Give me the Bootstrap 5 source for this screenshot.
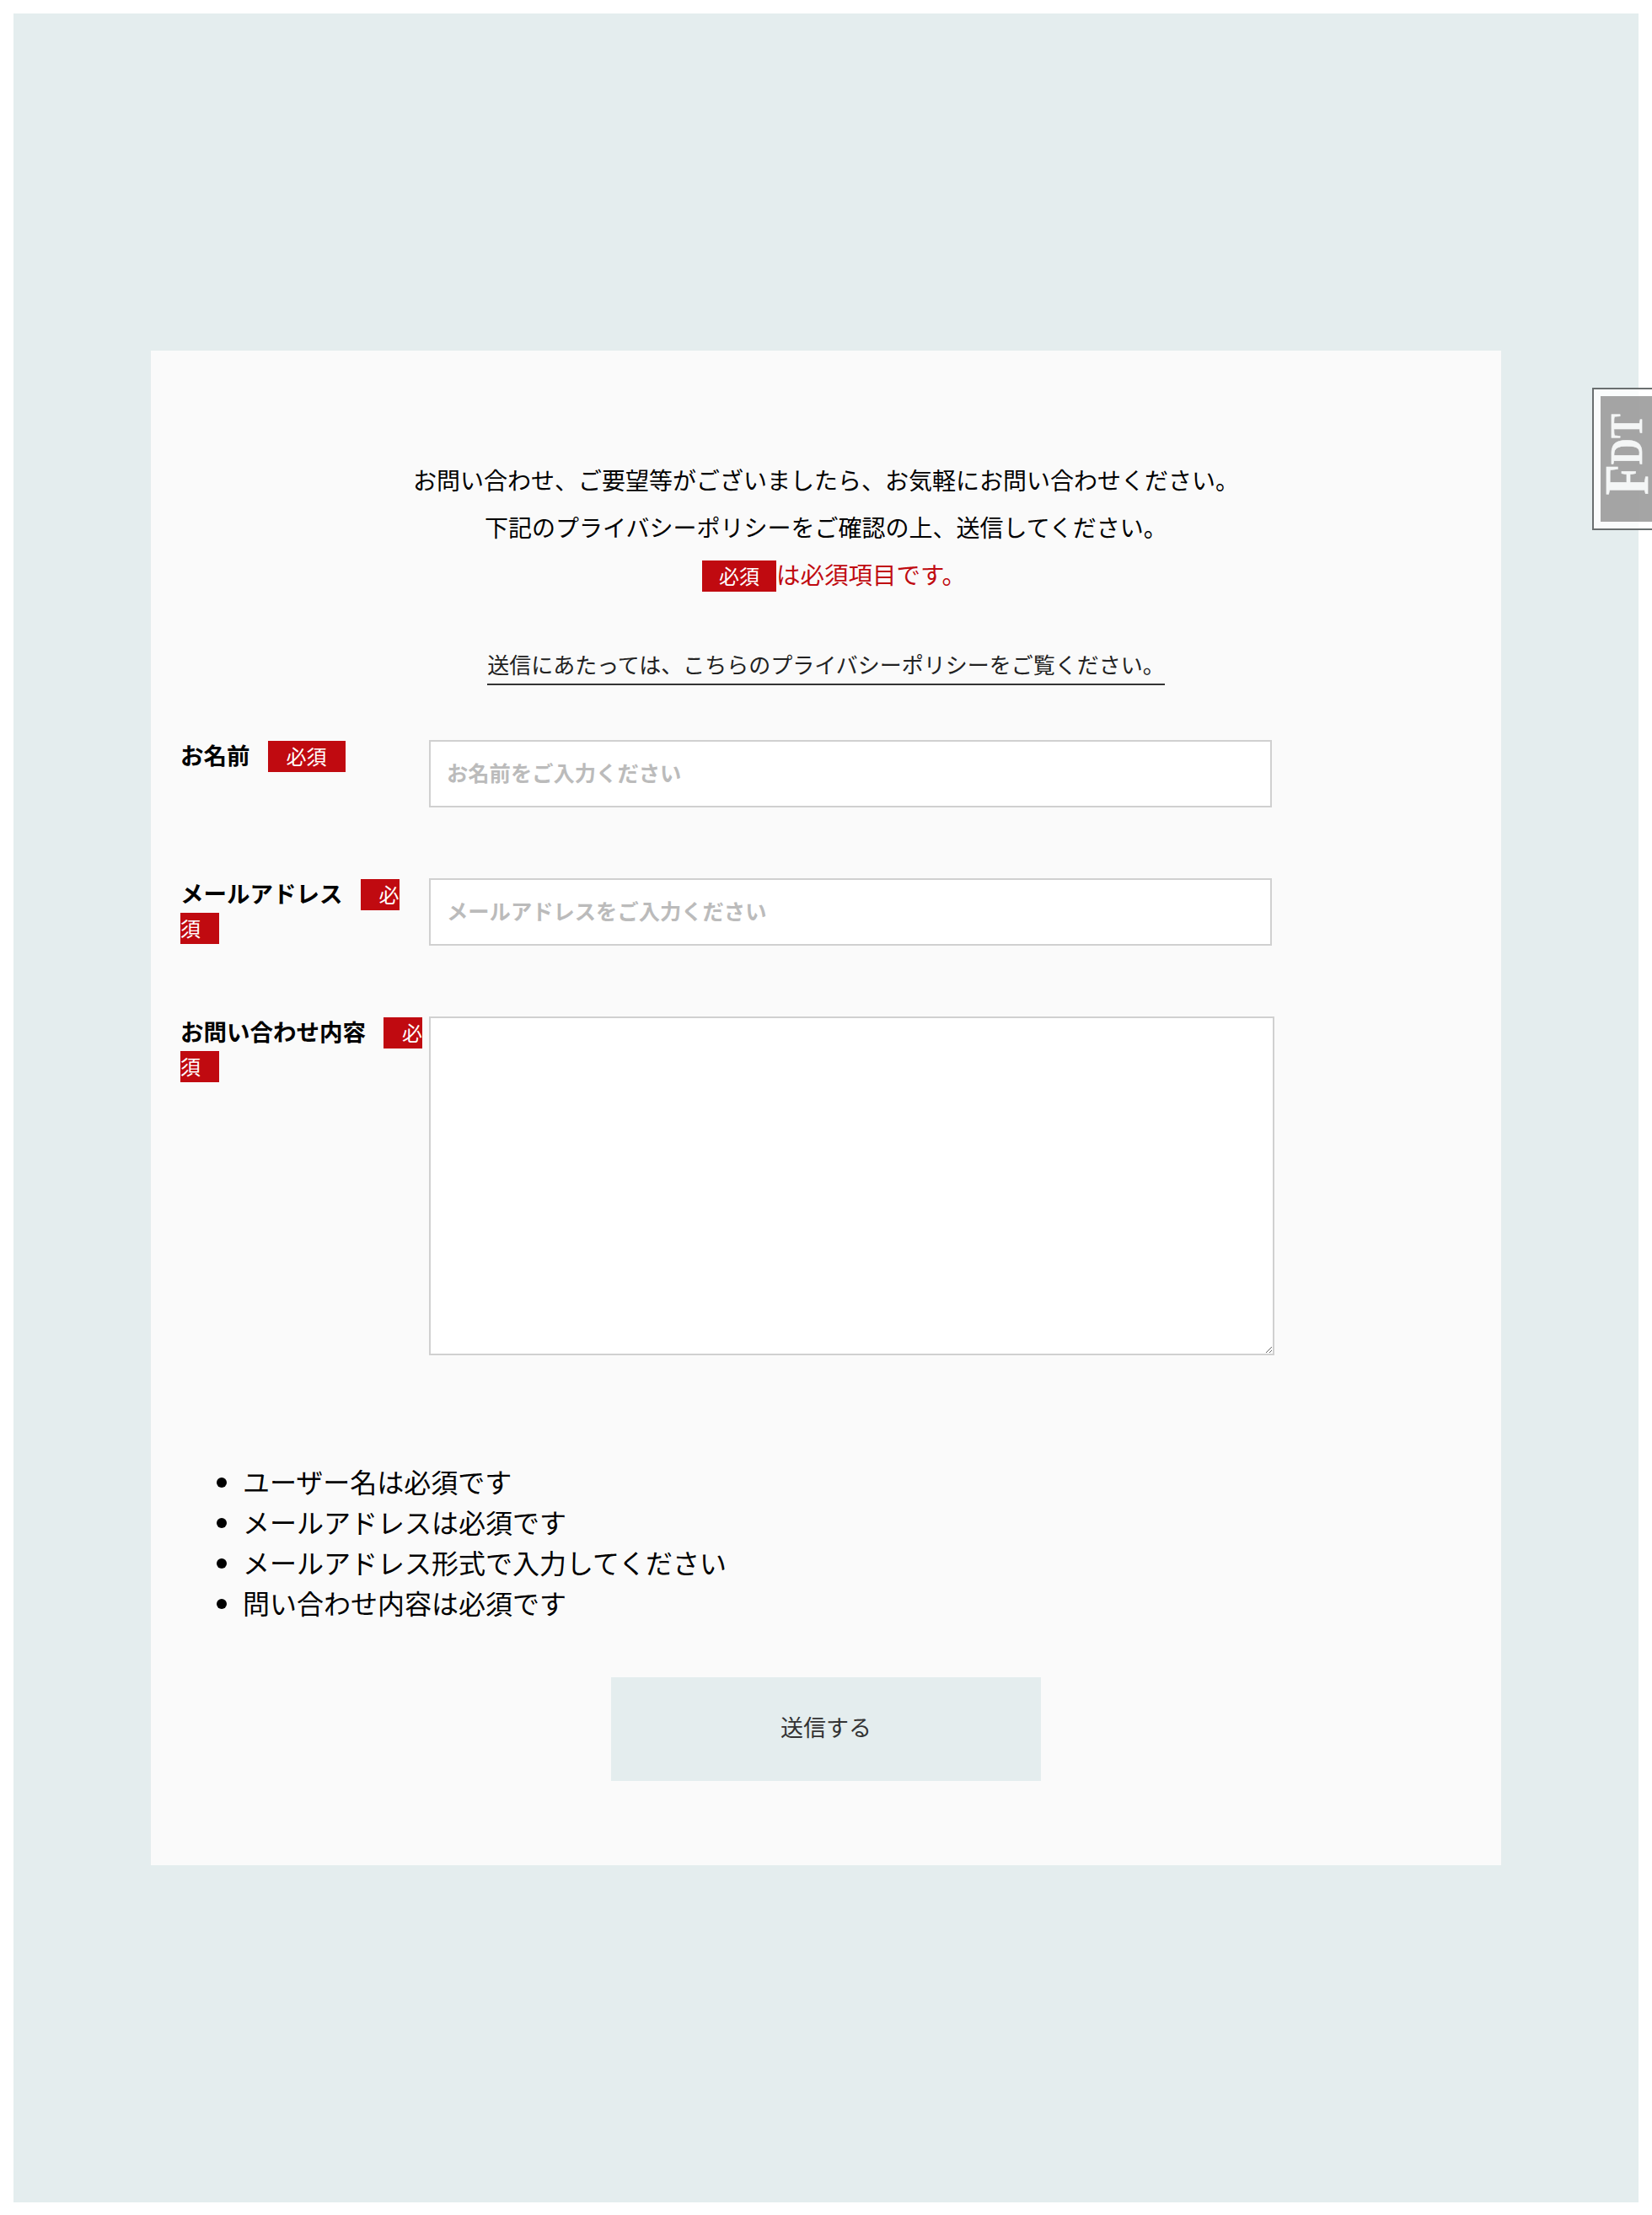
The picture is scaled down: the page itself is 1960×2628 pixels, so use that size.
<!DOCTYPE html>
<html lang="ja">
<head>
<meta charset="utf-8">
<title>お問い合わせ</title>
<link href="https://cdn.jsdelivr.net/npm/bootstrap@5.3.0/dist/css/bootstrap.min.css" rel="stylesheet">
<style>
html, body { background: #fff; }
body { font-family: "Noto Sans CJK JP", "Liberation Sans", sans-serif; color: #000; margin: 0; padding: 16px; height: 2628px; overflow: hidden; }
.page-wrap { background: #e4edee; height: 2597px; padding: 400px 163px; }
.form-panel { background: #fafafa; height: 1797px; padding: 125px 35px 0; }
.intro { font-size: 28px; line-height: 56px; text-align: center; margin-bottom: 56px; }
.intro p { margin: 0; }
.req-note { color: #c00a10; font-size: 28.5px; }
.req-tag { background: #c00a10; color: #fff; font-size: 24px; font-weight: 400; line-height: 1; padding: 0 20px 2px; }
.note-tag { margin-left: 19px; }
.label-tag { margin-left: 21px; padding: 0 22px 2px; }
.policy-line { text-align: center; margin-bottom: 65px; }
.policy-link { display: inline-block; font-size: 26px; line-height: 46px; color: #222; text-decoration: none; border-bottom: 2px solid #333; }
.field-row { margin-bottom: 84px; }
.field-label { width: 295px; flex: none; font-size: 27.5px; font-weight: 700; line-height: 40px; margin: -3px 0 0; }
.field-input.form-control { width: 1000px; height: 80px; border: 2px solid #d0d0d0; border-radius: 0; padding: 0 19px 4px; font-size: 25.3px; font-weight: 700; background: #fff; }
.field-input.form-control::placeholder { color: #bbb; opacity: 1; }
textarea.field-input.form-control { width: 1003px; height: 402px; min-height: 0; font-weight: 400; }
.field-last { margin-bottom: 125px; }
.errors { font-size: 32px; line-height: 48px; margin: 0 0 65px; padding-left: 74px; }
.send-btn.btn { display: block; width: 510px; height: 123px; margin: 0 auto; padding: 0 0 4px; background: #e4edee; color: #333; border: 0; border-radius: 0; font-size: 27px; }
.side-tab { position: fixed; top: 460px; left: 1889px; width: 71px; height: 169px; border: 2px solid #6a6f70; border-right: 0; padding: 8px 0 8px 8px; background: rgba(255,255,255,.8); }
.side-inner { height: 100%; background: rgba(130,130,130,.72); }
.side-mark { writing-mode: vertical-rl; transform: translateY(-5px) rotate(180deg) scaleY(.8); font-family: "Liberation Serif", serif; font-weight: 700; color: #f4f6f6; line-height: 1; -webkit-text-stroke: .6px #f4f6f6; }
.side-big { font-size: 74px; }
.side-small { font-size: 54px; }
</style>
</head>
<body>
<div class="page-wrap">
  <main class="form-panel">
    <div class="intro">
      <p>お問い合わせ、ご要望等がございましたら、お気軽にお問い合わせください。</p>
      <p>下記のプライバシーポリシーをご確認の上、送信してください。</p>
      <p class="req-note"><span class="req-tag note-tag">必須</span>は必須項目です。</p>
    </div>
    <div class="policy-line"><a class="policy-link" href="#">送信にあたっては、こちらのプライバシーポリシーをご覧ください。</a></div>
    <form>
      <div class="d-flex align-items-start field-row">
        <label class="field-label">お名前<span class="req-tag label-tag">必須</span></label>
        <input class="form-control field-input" type="text" placeholder="お名前をご入力ください">
      </div>
      <div class="d-flex align-items-start field-row">
        <label class="field-label">メールアドレス<span class="req-tag label-tag">必須</span></label>
        <input class="form-control field-input" type="text" placeholder="メールアドレスをご入力ください">
      </div>
      <div class="d-flex align-items-start field-row field-last">
        <label class="field-label">お問い合わせ内容<span class="req-tag label-tag">必須</span></label>
        <textarea class="form-control field-input"></textarea>
      </div>
      <ul class="errors">
        <li>ユーザー名は必須です</li>
        <li>メールアドレスは必須です</li>
        <li>メールアドレス形式で入力してください</li>
        <li>問い合わせ内容は必須です</li>
      </ul>
      <button class="btn send-btn" type="button">送信する</button>
    </form>
  </main>
</div>
<aside class="side-tab">
  <div class="side-inner d-flex align-items-center justify-content-center">
    <div class="side-mark d-flex align-items-center"><span class="side-big">F</span><span class="side-small">DT</span></div>
  </div>
</aside>
<script src="https://cdn.jsdelivr.net/npm/bootstrap@5.3.0/dist/js/bootstrap.bundle.min.js"></script>
</body>
</html>
